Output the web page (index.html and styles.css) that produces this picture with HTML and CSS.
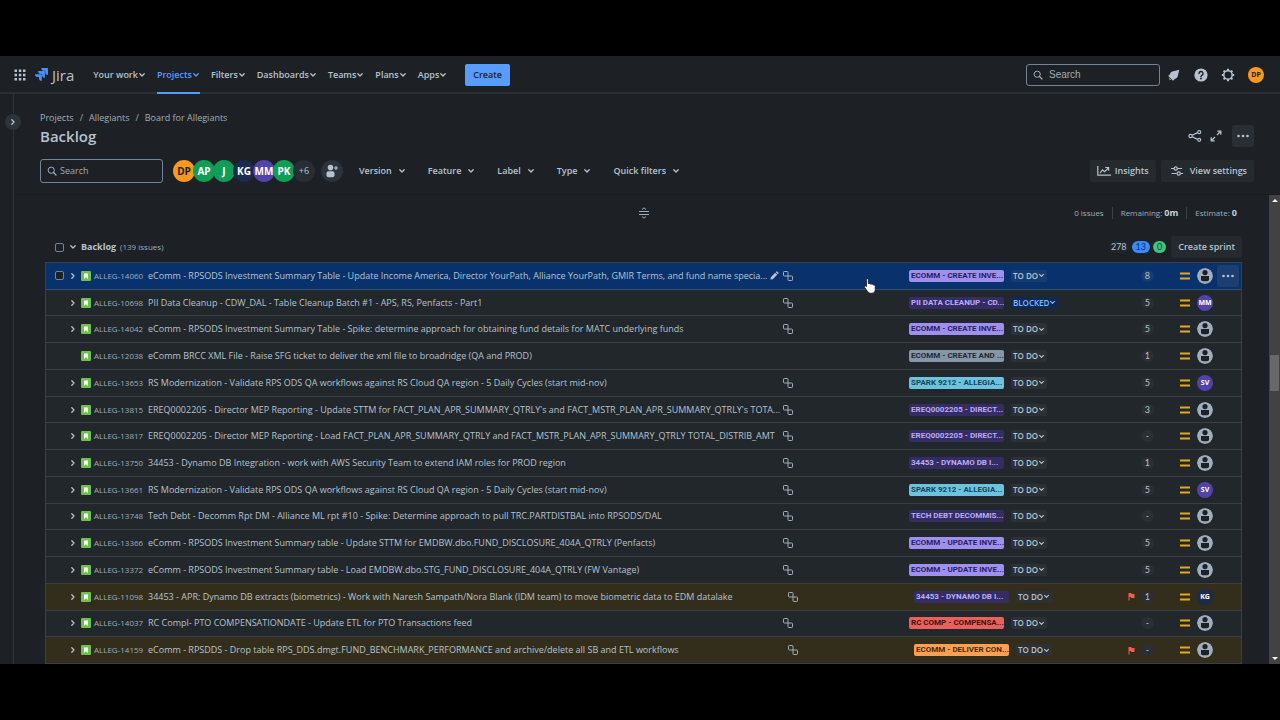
FILE: index.html
```html
<!DOCTYPE html>
<html lang="en">
<head>
<meta charset="utf-8">
<title>Backlog - Jira</title>
<link rel="stylesheet" href="styles.css">
</head>
<body>
<svg class="sprite" aria-hidden="true">
  <symbol id="down" viewBox="0 0 8 8"><path d="M1.8 2.8 4 5l2.200-2.200" fill="none" stroke="currentColor" stroke-width="1.300" stroke-linecap="round" stroke-linejoin="round"/></symbol>
  <symbol id="right" viewBox="0 0 8 8"><path d="M2.800 1.800 5 4 2.800 6.200" fill="none" stroke="currentColor" stroke-width="1.300" stroke-linecap="round" stroke-linejoin="round"/></symbol>
  <symbol id="search" viewBox="0 0 10 10"><circle cx="4.200" cy="4.200" r="3.100" fill="none" stroke="currentColor"/><path d="M6.500 6.500 9 9" stroke="currentColor" stroke-width="1.200" stroke-linecap="round"/></symbol>
  <symbol id="story" viewBox="0 0 10 10"><rect width="10" height="10" rx="1" fill="#6cc24a"/><path d="M3 2.500h4v5.500L5 6.200 3 8z" fill="#fff"/></symbol>
  <symbol id="link" viewBox="0 0 10 10"><g fill="none" stroke="currentColor" stroke-linejoin="round"><path d="M5 3V1.200a.7.7 0 0 0-.7-.7H1.200a.7.7 0 0 0-.7.7v3.100c0 .4.300.7.700.700h7.600c.4 0 .7.300.7.700v3.100a.7.7 0 0 1-.7.700H5.700a.7.7 0 0 1-.7-.7V3"/></g></symbol>
  <symbol id="medium" viewBox="0 0 10 8"><path d="M0 1.500h10M0 6.500h10" stroke="#e2a91c" stroke-width="2"/></symbol>
  <symbol id="person" viewBox="0 0 16 16"><circle cx="8" cy="8" r="8" fill="#9fadbc"/><circle cx="8" cy="4.600" r="2.600" fill="#1d2125"/><path d="M4 8h8v3.300a2 2 0 0 1-2 2H6a2 2 0 0 1-2-2z" fill="#1d2125"/></symbol>
  <symbol id="flag" viewBox="0 0 8 9"><path d="M1.500 1h3v1h3v4h-3.500V5H2.500v3.500h-1z" fill="#f15b50"/></symbol>
  <symbol id="more" viewBox="0 0 14 4"><g fill="currentColor"><circle cx="2.500" cy="2" r="1.300"/><circle cx="7" cy="2" r="1.300"/><circle cx="11.500" cy="2" r="1.300"/></g></symbol>
</svg>

<div class="app">
  <header class="topbar">
    <button class="icon-btn" aria-label="Switch apps"><svg width="12" height="12" viewBox="0 0 12 12" fill="currentColor"><path d="M.5.500h2.500v2.500H.5zM4.800.500h2.500v2.500H4.800zM9 .500h2.500v2.500H9zM.5 4.800h2.500v2.500H.5zM4.800 4.800h2.500v2.500H4.800zM9 4.800h2.500v2.500H9zM.5 9h2.500v2.500H.5zM4.800 9h2.500v2.500H4.800zM9 9h2.500v2.500H9z"/></svg></button>
    <a class="brand" href="#"><svg width="13" height="13" viewBox="0 0 24 24" fill="#4c8df6"><path d="M23 0H11.500a5.200 5.200 0 0 0 5.200 5.200h2.100v2A5.200 5.200 0 0 0 24 12.500V1a1 1 0 0 0-1-1z"/><path d="M17.300 5.700H5.800A5.200 5.200 0 0 0 11 11h2.100v2a5.200 5.200 0 0 0 5.200 5.200V6.700a1 1 0 0 0-1-1z"/><path d="M11.600 11.500H0a5.200 5.200 0 0 0 5.200 5.200h2.200v2A5.200 5.200 0 0 0 12.600 24V12.500a1 1 0 0 0-1-1z"/></svg><span>Jira</span></a>
    <nav class="menu" aria-label="Main">
      <button>Your work<svg><use href="#down"/></svg></button>
      <button class="current">Projects<svg><use href="#down"/></svg></button>
      <button>Filters<svg><use href="#down"/></svg></button>
      <button>Dashboards<svg><use href="#down"/></svg></button>
      <button>Teams<svg><use href="#down"/></svg></button>
      <button>Plans<svg><use href="#down"/></svg></button>
      <button>Apps<svg><use href="#down"/></svg></button>
    </nav>
    <button class="create">Create</button>
    <label class="search top-search"><svg width="10" height="10"><use href="#search"/></svg><input type="text" placeholder="Search" aria-label="Search Jira"></label>
    <div class="tools">
      <button class="icon-btn" aria-label="Notifications"><svg width="14" height="14" viewBox="0 0 14 14" fill="currentColor"><path d="M12.300 1.700 5.200 3.600C4 4 3.400 5 2.900 6.200L1.200 7.900l4.900 4.900 1.700-1.700c1.500-.6 2.500-1.200 2.900-2.500z"/><path d="M2.300 9.900 4.100 11.700a1.300 1.300 0 0 1-1.800-1.800z"/></svg></button>
      <button class="icon-btn" aria-label="Help"><svg width="14" height="14" viewBox="0 0 14 14"><circle cx="7" cy="7" r="6.600" fill="currentColor"/><path d="M5 5.500a2 2 0 1 1 2.900 1.800c-.6.300-.9.600-.9 1.300" fill="none" stroke="#1d2125" stroke-width="1.400" stroke-linecap="round"/><circle cx="7" cy="10.500" r=".9" fill="#1d2125"/></svg></button>
      <button class="icon-btn" aria-label="Settings"><svg width="14" height="14" viewBox="0 0 14 14" fill="none" stroke="currentColor"><circle cx="7" cy="7" r="4.200" stroke-width="1.500"/><path d="M7 .800v2M7 11.200v2M.8 7h2M11.200 7h2M2.600 2.600 4 4M10 10l1.400 1.400M2.600 11.400 4 10M10 4l1.400-1.400" stroke-width="2"/></svg></button>
      <button class="me" aria-label="Your profile">DP</button>
    </div>
  </header>

  <div class="body">
    <aside class="rail"><button aria-label="Expand sidebar"><svg width="8" height="8"><use href="#right"/></svg></button></aside>
    <main>
      <div class="page-head">
        <nav class="crumbs" aria-label="Breadcrumb"><a href="#">Projects</a><span>/</span><a href="#">Allegiants</a><span>/</span><a href="#">Board for Allegiants</a></nav>
        <div class="title-row">
          <h1>Backlog</h1>
          <div class="title-actions">
            <button class="icon-btn" aria-label="Share"><svg width="14" height="12" viewBox="0 0 14 12" fill="none" stroke="currentColor" stroke-width="1.200"><path d="M4.200 5.200 9.500 2.600M4.200 6.800l5.300 2.600"/><circle cx="2.600" cy="6" r="1.700"/><circle cx="11.200" cy="2.200" r="1.500"/><circle cx="11.200" cy="9.800" r="1.500"/></svg></button>
            <button class="icon-btn" aria-label="Full screen"><svg width="12" height="12" viewBox="0 0 12 12" fill="none" stroke="currentColor" stroke-width="1.300"><path d="M7 5l3.500-3.500M7.300 1.200h3.500v3.500M5 7 1.500 10.500M1.200 7.300v3.500h3.500"/></svg></button>
            <button class="square" aria-label="More actions"><svg width="14" height="4"><use href="#more"/></svg></button>
          </div>
        </div>
        <div class="filters">
          <label class="search board-search"><svg width="10" height="10"><use href="#search"/></svg><input type="text" placeholder="Search" aria-label="Search backlog"></label>
          <div class="people">
            <button class="orange">DP</button><button class="green">AP</button><button class="green">J</button><button class="navy">KG</button><button class="purple">MM</button><button class="green">PK</button><button class="extra">+6</button>
          </div>
          <button class="add" aria-label="Add people"><svg width="14" height="14" viewBox="0 0 14 14" fill="#b6c2cf"><circle cx="5.500" cy="3.600" r="2.800"/><rect x="1.500" y="7.200" width="8" height="6" rx="2"/><path d="M10.400 2h1.200v1.400H13v1.200h-1.400V6h-1.200V4.600H9V3.400h1.400z"/></svg></button>
          <div class="dropdowns">
            <button>Version<svg><use href="#down"/></svg></button>
            <button>Feature<svg><use href="#down"/></svg></button>
            <button>Label<svg><use href="#down"/></svg></button>
            <button>Type<svg><use href="#down"/></svg></button>
            <button>Quick filters<svg><use href="#down"/></svg></button>
          </div>
          <div class="view">
            <button><svg width="14" height="10" viewBox="0 0 14 10" fill="none" stroke="currentColor" stroke-width="1.200"><path d="M.8 0v9.200H14M3 7l2.500-3.200 2 1.800L11.400 2M8.300 1.500h3.300v3.300"/></svg>Insights</button>
            <button class="wide"><svg width="12" height="10" viewBox="0 0 12 10" fill="none" stroke="currentColor" stroke-width="1.200"><path d="M0 2.500h3M6.500 2.500H11M.5 7.500h5M9.500 7.500H12"/><circle cx="4.700" cy="2.500" r="1.600"/><circle cx="7.700" cy="7.500" r="1.600"/></svg>View settings</button>
          </div>
        </div>
      </div>

      <div class="scroller">
        <div class="content">
          <div class="sprint-foot">
            <svg class="grip" width="12" height="12" viewBox="0 0 12 12" fill="none" stroke="currentColor"><path d="M1 4.500h10M1 7.500h10M4 2.500 6 .8l2 1.700M4 9.500l2 1.700 2-1.700"/></svg>
            <div class="totals"><span>0 issues</span><span>Remaining: <b>0m</b></span><span>Estimate: <b>0</b></span></div>
          </div>
          <div class="list-head">
            <input type="checkbox" aria-label="Select all issues">
            <button class="toggle" aria-label="Collapse backlog"><svg width="8" height="8"><use href="#down"/></svg></button>
            <h2>Backlog</h2><span class="count">(139 issues)</span>
            <div class="sums"><span class="points total">278</span><span class="points blue">13</span><span class="points lime">0</span></div>
            <button class="sprint">Create sprint</button>
          </div>
          <ul class="issues">
            <li class="selected"><input type="checkbox" aria-label="Select ALLEG-14060"><button class="toggle" aria-label="Expand"><svg width="8" height="8"><use href="#right"/></svg></button><svg class="story"><use href="#story"/></svg><a class="key" href="#">ALLEG-14060</a><span class="name">eComm - RPSODS Investment Summary Table - Update Income America, Director YourPath, Alliance YourPath, GMIR Terms, and fund name specia...</span><button class="edit" aria-label="Edit summary"><svg width="9" height="9" viewBox="0 0 9 9" fill="#b6c2cf"><path d="M.8 6.200 5.200 1.800l2 2L2.800 8.200.4 8.600zM5.800 1.200l.7-.7a.6.6 0 0 1 .8 0l1.200 1.200a.6.6 0 0 1 0 .8l-.7.700z"/></svg></button>
              <div class="side"><svg class="link"><use href="#link"/></svg><a class="epic lilac" href="#">ECOMM - CREATE INVE...</a><button class="status">TO DO<svg><use href="#down"/></svg></button><div class="end"><span class="points">8</span><svg class="prio"><use href="#medium"/></svg><svg class="avatar"><use href="#person"/></svg><button class="square row-more" aria-label="Issue actions"><svg width="14" height="4"><use href="#more"/></svg></button></div></div></li>
            <li><button class="toggle" aria-label="Expand"><svg width="8" height="8"><use href="#right"/></svg></button><svg class="story"><use href="#story"/></svg><a class="key" href="#">ALLEG-10698</a><span class="name">PII Data Cleanup - CDW_DAL - Table Cleanup Batch #1 - APS, RS, Penfacts - Part1</span>
              <div class="side"><svg class="link"><use href="#link"/></svg><a class="epic violet" href="#">PII DATA CLEANUP - CD...</a><button class="status blocked">BLOCKED<svg><use href="#down"/></svg></button><div class="end"><span class="points">5</span><svg class="prio"><use href="#medium"/></svg><span class="avatar purple">MM</span></div></div></li>
            <li><button class="toggle" aria-label="Expand"><svg width="8" height="8"><use href="#right"/></svg></button><svg class="story"><use href="#story"/></svg><a class="key" href="#">ALLEG-14042</a><span class="name">eComm - RPSODS Investment Summary Table - Spike: determine approach for obtaining fund details for MATC underlying funds</span>
              <div class="side"><svg class="link"><use href="#link"/></svg><a class="epic lilac" href="#">ECOMM - CREATE INVE...</a><button class="status">TO DO<svg><use href="#down"/></svg></button><div class="end"><span class="points">5</span><svg class="prio"><use href="#medium"/></svg><svg class="avatar"><use href="#person"/></svg></div></div></li>
            <li class="leaf"><svg class="story"><use href="#story"/></svg><a class="key" href="#">ALLEG-12038</a><span class="name">eComm BRCC XML File - Raise SFG ticket to deliver the xml file to broadridge (QA and PROD)</span>
              <div class="side"><a class="epic gray" href="#">ECOMM - CREATE AND ...</a><button class="status">TO DO<svg><use href="#down"/></svg></button><div class="end"><span class="points">1</span><svg class="prio"><use href="#medium"/></svg><svg class="avatar"><use href="#person"/></svg></div></div></li>
            <li><button class="toggle" aria-label="Expand"><svg width="8" height="8"><use href="#right"/></svg></button><svg class="story"><use href="#story"/></svg><a class="key" href="#">ALLEG-13653</a><span class="name">RS Modernization - Validate RPS ODS QA workflows against RS Cloud QA region - 5 Daily Cycles (start mid-nov)</span>
              <div class="side"><svg class="link"><use href="#link"/></svg><a class="epic cyan" href="#">SPARK 9212 - ALLEGIA...</a><button class="status">TO DO<svg><use href="#down"/></svg></button><div class="end"><span class="points">5</span><svg class="prio"><use href="#medium"/></svg><span class="avatar purple">SV</span></div></div></li>
            <li><button class="toggle" aria-label="Expand"><svg width="8" height="8"><use href="#right"/></svg></button><svg class="story"><use href="#story"/></svg><a class="key" href="#">ALLEG-13815</a><span class="name">EREQ0002205 - Director MEP Reporting - Update STTM for FACT_PLAN_APR_SUMMARY_QTRLY's and FACT_MSTR_PLAN_APR_SUMMARY_QTRLY's TOTA...</span>
              <div class="side"><svg class="link"><use href="#link"/></svg><a class="epic violet" href="#">EREQ0002205 - DIRECT...</a><button class="status">TO DO<svg><use href="#down"/></svg></button><div class="end"><span class="points">3</span><svg class="prio"><use href="#medium"/></svg><svg class="avatar"><use href="#person"/></svg></div></div></li>
            <li><button class="toggle" aria-label="Expand"><svg width="8" height="8"><use href="#right"/></svg></button><svg class="story"><use href="#story"/></svg><a class="key" href="#">ALLEG-13817</a><span class="name">EREQ0002205 - Director MEP Reporting - Load FACT_PLAN_APR_SUMMARY_QTRLY and FACT_MSTR_PLAN_APR_SUMMARY_QTRLY TOTAL_DISTRIB_AMT</span>
              <div class="side"><svg class="link"><use href="#link"/></svg><a class="epic violet" href="#">EREQ0002205 - DIRECT...</a><button class="status">TO DO<svg><use href="#down"/></svg></button><div class="end"><span class="points">-</span><svg class="prio"><use href="#medium"/></svg><svg class="avatar"><use href="#person"/></svg></div></div></li>
            <li><button class="toggle" aria-label="Expand"><svg width="8" height="8"><use href="#right"/></svg></button><svg class="story"><use href="#story"/></svg><a class="key" href="#">ALLEG-13750</a><span class="name">34453 - Dynamo DB Integration - work with AWS Security Team to extend IAM roles for PROD region</span>
              <div class="side"><svg class="link"><use href="#link"/></svg><a class="epic violet" href="#">34453 - DYNAMO DB I...</a><button class="status">TO DO<svg><use href="#down"/></svg></button><div class="end"><span class="points">1</span><svg class="prio"><use href="#medium"/></svg><svg class="avatar"><use href="#person"/></svg></div></div></li>
            <li><button class="toggle" aria-label="Expand"><svg width="8" height="8"><use href="#right"/></svg></button><svg class="story"><use href="#story"/></svg><a class="key" href="#">ALLEG-13661</a><span class="name">RS Modernization - Validate RPS ODS QA workflows against RS Cloud QA region - 5 Daily Cycles (start mid-nov)</span>
              <div class="side"><svg class="link"><use href="#link"/></svg><a class="epic cyan" href="#">SPARK 9212 - ALLEGIA...</a><button class="status">TO DO<svg><use href="#down"/></svg></button><div class="end"><span class="points">5</span><svg class="prio"><use href="#medium"/></svg><span class="avatar purple">SV</span></div></div></li>
            <li><button class="toggle" aria-label="Expand"><svg width="8" height="8"><use href="#right"/></svg></button><svg class="story"><use href="#story"/></svg><a class="key" href="#">ALLEG-13748</a><span class="name">Tech Debt - Decomm Rpt DM - Alliance ML rpt #10 - Spike: Determine approach to pull TRC.PARTDISTBAL into RPSODS/DAL</span>
              <div class="side"><svg class="link"><use href="#link"/></svg><a class="epic violet" href="#">TECH DEBT DECOMMIS...</a><button class="status">TO DO<svg><use href="#down"/></svg></button><div class="end"><span class="points">-</span><svg class="prio"><use href="#medium"/></svg><svg class="avatar"><use href="#person"/></svg></div></div></li>
            <li><button class="toggle" aria-label="Expand"><svg width="8" height="8"><use href="#right"/></svg></button><svg class="story"><use href="#story"/></svg><a class="key" href="#">ALLEG-13366</a><span class="name">eComm - RPSODS Investment Summary table - Update STTM for EMDBW.dbo.FUND_DISCLOSURE_404A_QTRLY (Penfacts)</span>
              <div class="side"><svg class="link"><use href="#link"/></svg><a class="epic lilac" href="#">ECOMM - UPDATE INVE...</a><button class="status">TO DO<svg><use href="#down"/></svg></button><div class="end"><span class="points">5</span><svg class="prio"><use href="#medium"/></svg><svg class="avatar"><use href="#person"/></svg></div></div></li>
            <li><button class="toggle" aria-label="Expand"><svg width="8" height="8"><use href="#right"/></svg></button><svg class="story"><use href="#story"/></svg><a class="key" href="#">ALLEG-13372</a><span class="name">eComm - RPSODS Investment Summary table - Load EMDBW.dbo.STG_FUND_DISCLOSURE_404A_QTRLY (FW Vantage)</span>
              <div class="side"><svg class="link"><use href="#link"/></svg><a class="epic lilac" href="#">ECOMM - UPDATE INVE...</a><button class="status">TO DO<svg><use href="#down"/></svg></button><div class="end"><span class="points">5</span><svg class="prio"><use href="#medium"/></svg><svg class="avatar"><use href="#person"/></svg></div></div></li>
            <li class="flagged"><button class="toggle" aria-label="Expand"><svg width="8" height="8"><use href="#right"/></svg></button><svg class="story"><use href="#story"/></svg><a class="key" href="#">ALLEG-11098</a><span class="name">34453 - APR: Dynamo DB extracts (biometrics) - Work with Naresh Sampath/Nora Blank (IDM team) to move biometric data to EDM datalake</span>
              <div class="side"><svg class="link"><use href="#link"/></svg><a class="epic violet" href="#">34453 - DYNAMO DB I...</a><button class="status">TO DO<svg><use href="#down"/></svg></button><div class="end"><svg class="flag"><use href="#flag"/></svg><span class="points">1</span><svg class="prio"><use href="#medium"/></svg><span class="avatar navy">KG</span></div></div></li>
            <li><button class="toggle" aria-label="Expand"><svg width="8" height="8"><use href="#right"/></svg></button><svg class="story"><use href="#story"/></svg><a class="key" href="#">ALLEG-14037</a><span class="name">RC Compl- PTO COMPENSATIONDATE - Update ETL for PTO Transactions feed</span>
              <div class="side"><svg class="link"><use href="#link"/></svg><a class="epic red" href="#">RC COMP - COMPENSA...</a><button class="status">TO DO<svg><use href="#down"/></svg></button><div class="end"><span class="points">-</span><svg class="prio"><use href="#medium"/></svg><svg class="avatar"><use href="#person"/></svg></div></div></li>
            <li class="flagged"><button class="toggle" aria-label="Expand"><svg width="8" height="8"><use href="#right"/></svg></button><svg class="story"><use href="#story"/></svg><a class="key" href="#">ALLEG-14159</a><span class="name">eComm - RPSDDS - Drop table RPS_DDS.dmgt.FUND_BENCHMARK_PERFORMANCE and archive/delete all SB and ETL workflows</span>
              <div class="side"><svg class="link"><use href="#link"/></svg><a class="epic amber" href="#">ECOMM - DELIVER CON...</a><button class="status">TO DO<svg><use href="#down"/></svg></button><div class="end"><svg class="flag"><use href="#flag"/></svg><span class="points">-</span><svg class="prio"><use href="#medium"/></svg><svg class="avatar"><use href="#person"/></svg></div></div></li>
          </ul>
        </div>
        <div class="scrollbar" aria-hidden="true"><i class="arrow up"></i><i class="thumb"></i><i class="arrow dn"></i></div>
      </div>
    </main>
  </div>
</div>
<svg class="cursor" width="12" height="16" viewBox="0 0 12 16" aria-hidden="true"><path d="M2.500 1.600c0-1.300 1.800-1.300 1.800 0V6c.3-.8 1.700-.6 1.800.2.500-.7 1.700-.5 1.800.4.600-.6 1.700-.2 1.700.7.700-.5 1.600 0 1.600.9v3.300c0 2.300-1.200 3.700-3.400 3.700H6.700c-1.400 0-2.200-.5-3-1.700L.7 9.600c-.7-1.100.5-2.100 1.400-1.300l.4.400z" fill="#fff" stroke="#111" stroke-width=".7"/></svg>
</body>
</html>
```
FILE: styles.css
```css
* { box-sizing: border-box; }
body {
  margin: 0;
  height: 100vh;
  padding: 56px 0;
  background: #000;
  color: #b6c2cf;
  font: 9px/12px "Open Sans", "Noto Sans", sans-serif;
  overflow: hidden;
}
.sprite { position: absolute; width: 0; height: 0; }
button, input { font: inherit; color: inherit; margin: 0; }
button { display: inline-flex; align-items: center; justify-content: center; padding: 0; border: 0; background: none; white-space: nowrap; }
a { color: inherit; text-decoration: none; }
svg { flex: none; }
h1, h2, ul { margin: 0; padding: 0; }

.app { height: 100%; display: flex; flex-direction: column; background: #1d2125; }

.topbar { flex: none; display: flex; align-items: center; height: 38px; padding: 1px 16px 0 14px; border-bottom: 2px solid #2a2f34; }
.brand { display: flex; align-items: center; gap: 4px; margin: 0 19px 0 9px; font: 15px/20px "Open Sans", sans-serif; }
.menu { display: flex; align-self: stretch; gap: 11px; margin-bottom: -2px; }
.menu button { font-weight: 600; gap: 0; border-bottom: 2px solid transparent; }
.menu svg, .dropdowns svg { width: 8px; height: 8px; }
.menu .current { color: #579dff; border-color: #579dff; }
.create { margin-left: 18px; height: 22px; padding: 0 8px; border-radius: 2px; background: #579dff; color: #1d2125; font-weight: 600; }
.search { display: flex; align-items: center; gap: 6px; padding: 0 6px; border: 1px solid #738496; border-radius: 3px; color: #9fadbc; }
.search input { flex: 1; min-width: 0; padding: 0; border: 0; outline: 0; background: none; }
.search input::placeholder { color: #9fadbc; opacity: 1; }
.top-search { width: 134px; height: 22px; margin-left: auto; font: 10px/12px "Liberation Sans", sans-serif; }
.tools { display: flex; align-items: center; gap: 13px; margin-left: 7px; }
.icon-btn { color: #b6c2cf; }
.me { width: 16px; height: 16px; border-radius: 50%; background: #f7981f; color: #1d2125; font-size: 7px; font-weight: 700; }

.body { flex: 1; min-height: 0; display: flex; }
.rail { flex: none; width: 14px; border-right: 1px solid #2c3238; }
.rail button { position: relative; width: 16px; height: 16px; margin: 20px 0 0 5px; border-radius: 50%; background: #2c333a; }
main { flex: 1; min-width: 0; display: flex; flex-direction: column; }
.page-head { flex: none; padding: 18px 26px 11px 26px; border-bottom: 1px solid #191d20; }
.crumbs { display: flex; gap: 6px; color: #9fadbc; }
.title-row { display: flex; align-items: center; justify-content: space-between; height: 24px; }
h1 { font-size: 15px; line-height: 20px; font-weight: 600; }
.title-actions { display: flex; align-items: center; gap: 8px; }
.square { width: 22px; height: 22px; background: #282e33; border-radius: 2px; margin-left: 2px; }
.filters { display: flex; align-items: center; margin-top: 11px; }
.board-search { width: 123px; height: 24px; gap: 3px; }
.people { display: flex; margin-left: 10px; }
.people button, .add { width: 22px; height: 22px; border-radius: 50%; font-size: 10px; font-weight: 700; color: #fff; }
.people button + button { margin-left: -2px; }
.add { margin-left: 6px; background: #2c333a; }
.people .orange { background: #f7981f; color: #1d2125; }
.green { background: #0f9d58; }
.navy { background: #1c2b4d; }
.purple { background: #5243aa; }
.people .extra { background: #282e33; color: #b6c2cf; font-size: 9px; font-weight: 400; }
.dropdowns { display: flex; gap: 22px; margin-left: 16px; }
.dropdowns button { gap: 6px; font-weight: 600; }
.view { display: flex; gap: 5px; margin-left: auto; }
.view button, .sprint { height: 22px; padding: 0 7px; gap: 4px; border-radius: 2px; background: #252a2f; font-weight: 600; }
.view .wide { gap: 7px; padding: 0 7px 0 10px; }

.scroller { flex: 1; min-height: 0; display: flex; }
.content { flex: 1; min-width: 0; display: flex; flex-direction: column; padding: 0 27px 0 31px; }
.sprint-foot { display: grid; grid-template-columns: 1fr auto 1fr; align-items: center; height: 35px; color: #9fadbc; font-size: 8px; }
.grip { grid-column: 2; }
.totals { display: flex; justify-content: flex-end; margin-right: 5px; }
.totals span + span { margin-left: 8px; padding-left: 8px; border-left: 1px solid #3a4148; }
.totals b { color: #c7d1db; font-size: 9px; }
.list-head { display: flex; align-items: center; height: 32px; padding: 2px 0 0 10px; }
input[type="checkbox"] { appearance: none; flex: none; width: 9px; height: 9px; border: 1px solid #738496; border-radius: 2px; background: #1d2125; }
.toggle { width: 8px; height: 8px; margin-left: 5px; }
h2 { margin-left: 4px; font-size: 9px; line-height: 12px; font-weight: 700; }
.count { margin-left: 4px; color: #9fadbc; font-size: 8px; }
.sums { display: flex; gap: 3px; margin-left: auto; }
.points { min-width: 13px; padding: 0 4px; border-radius: 6px; background: #292f34; text-align: center; font: 9px/12px Lato, "Open Sans", sans-serif; }
.points.total { padding: 0 2px; background: #22272b; }
.points.blue { background: #388bff; color: #09326c; }
.points.lime { background: #3fc47c; color: #164b35; }
.sprint { margin-left: 5px; }

.issues { flex: 1; display: grid; grid-auto-rows: 1fr; list-style: none; border: 1px solid #3a4046; border-bottom: 0; }
.issues li { display: flex; align-items: center; min-width: 0; min-height: 0; padding-left: 23px; border-bottom: 1px solid #3a4046; background: #22272b; white-space: nowrap; }
.issues .toggle { margin-left: 0; }
.issues .selected { padding-left: 9px; background: #09326c; border-color: #2a5275; }
.issues .selected .toggle { margin-left: 5px; }
.issues .leaf { padding-left: 31px; }
.issues .flagged { background: #332e1b; }
.story { width: 10px; height: 10px; margin-left: 4px; }
.key { flex: none; width: 50px; margin-left: 3px; color: #9fadbc; font-size: 8px; }
.name { flex: 1; min-width: 0; margin-left: 4px; overflow: hidden; }
.edit { margin: 0 4px 0 0; }
.side { flex: none; display: flex; align-items: center; width: 458px; }
.flagged .side { width: 453px; }
.link { width: 10px; height: 10px; margin-right: 116px; color: #9fadbc; }
.leaf .side { padding-left: 126px; }
.epic { width: 95px; padding: 0 2px; border-radius: 2px; font: 700 8px/12px Roboto, "Open Sans", sans-serif; overflow: hidden; }
.lilac { background: #9f8fef; color: #2b1f5c; }
.violet { background: #352c63; color: #b8acf6; }
.gray { background: #8696a7; color: #1d2b38; }
.cyan { background: #6cc3e0; color: #164555; }
.red { background: #e8615a; color: #44110d; }
.amber { background: #faa053; color: #4a2a08; }
.status { height: 12px; margin-left: 7px; padding: 0 2px; border-radius: 2px; background: #2b3136; font-size: 8px; font-weight: 600; }
.status svg { width: 7px; height: 7px; }
.selected .status { background: #163c70; }
.status.blocked { background: #0c2a55; color: #85b8ff; }
.end { display: flex; align-items: center; margin-left: auto; padding-right: 28px; }
.selected .end { padding-right: 2px; }
.flag { width: 8px; height: 9px; margin-right: 6px; }
.prio { width: 10px; height: 8px; margin: 0 7px 0 26px; }
.avatar { display: flex; align-items: center; justify-content: center; width: 16px; height: 16px; border-radius: 50%; color: #fff; font-size: 7px; font-weight: 700; }
.row-more { margin-left: 4px; background: #1c3e73; }
.selected .points { background: #173c6e; }

.scrollbar { flex: none; display: flex; flex-direction: column; align-items: center; width: 11px; padding: 4px 0; background: #424242; }
.arrow { border: 3px solid transparent; }
.up { border-bottom-color: #fff; border-top: 0; }
.dn { border-top-color: #fff; border-bottom: 0; margin-top: auto; }
.thumb { width: 9px; height: 36px; margin-top: 153px; background: #686868; }
.cursor { position: absolute; left: 864px; top: 278px; }
```
